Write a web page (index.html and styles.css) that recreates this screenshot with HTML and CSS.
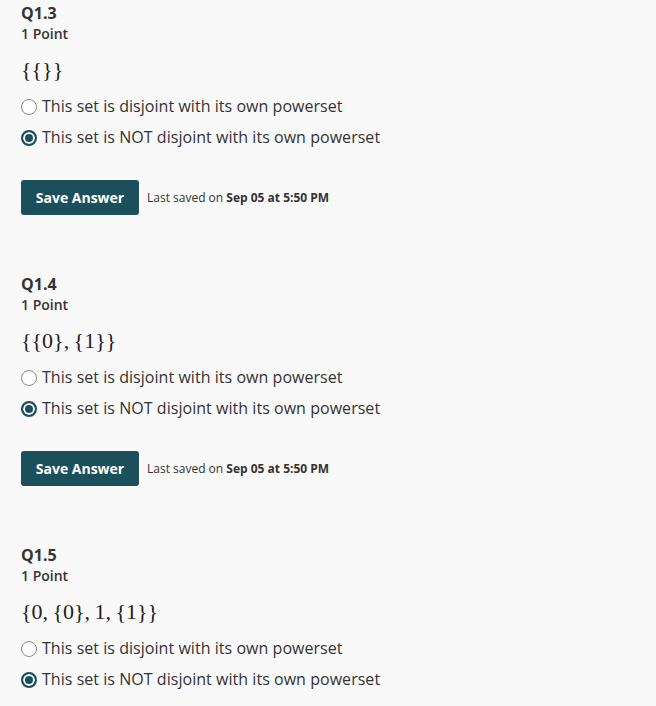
FILE: index.html
```html
<!DOCTYPE html>
<html lang="en">
<head>
  <meta charset="UTF-8">
  <meta name="viewport" content="width=device-width, initial-scale=1.0">
  <title>Questions</title>
  <link rel="stylesheet" href="styles.css">
</head>
<body>
  <div class="question">
    <h2 class="q-title">Q1.3</h2>
    <div class="q-points">1 Point</div>
    <div class="q-math">{{}}</div>
    <label class="option"><input type="radio" name="q13"> This set is disjoint with its own powerset</label>
    <label class="option"><input type="radio" name="q13" checked> This set is NOT disjoint with its own powerset</label>
    <div class="actions">
      <button type="button" class="save-btn">Save Answer</button>
      <span class="saved">Last saved on <b>Sep 05 at 5:50 PM</b></span>
    </div>
  </div>
  <div class="question">
    <h2 class="q-title">Q1.4</h2>
    <div class="q-points">1 Point</div>
    <div class="q-math">{{0},&thinsp;{1}}</div>
    <label class="option"><input type="radio" name="q14"> This set is disjoint with its own powerset</label>
    <label class="option"><input type="radio" name="q14" checked> This set is NOT disjoint with its own powerset</label>
    <div class="actions">
      <button type="button" class="save-btn">Save Answer</button>
      <span class="saved">Last saved on <b>Sep 05 at 5:50 PM</b></span>
    </div>
  </div>
  <div class="question">
    <h2 class="q-title">Q1.5</h2>
    <div class="q-points">1 Point</div>
    <div class="q-math">{0,&thinsp;{0},&thinsp;1,&thinsp;{1}}</div>
    <label class="option"><input type="radio" name="q15"> This set is disjoint with its own powerset</label>
    <label class="option"><input type="radio" name="q15" checked> This set is NOT disjoint with its own powerset</label>
  </div>
</body>
</html>
```

FILE: styles.css
```css
body {
  font-family: "Open Sans", sans-serif;
  margin: 0;
  padding: 2px 21px 0;
  background-color: #f9f9f9;
  color: #333;
}
.question {
  margin-bottom: 58px;
}
.q-title {
  font-size: 16px;
  font-weight: 700;
  line-height: 22px;
  margin: 0;
}
.q-points {
  font-size: 14px;
  font-weight: 600;
  line-height: 20px;
}
.q-math {
  font-family: "Liberation Serif", "DejaVu Serif", serif;
  font-size: 22px;
  line-height: 30px;
  margin-top: 11px;
  margin-bottom: 6px;
  color: #222;
}
.option {
  display: flex;
  align-items: center;
  gap: 5px;
  font-size: 16px;
  letter-spacing: 0.04px;
  line-height: 31px;
  height: 31px;
}
.option input {
  appearance: none;
  width: 16px;
  height: 16px;
  margin: 0;
  border: 1px solid #8a8a8a;
  border-radius: 50%;
  background-color: #fff;
  flex-shrink: 0;
}
.option input:checked {
  border: 2px solid #1b4f5b;
  box-shadow: inset 0 0 0 2px #fff;
  background-color: #1b4f5b;
}
.actions {
  display: flex;
  align-items: center;
  gap: 8px;
  margin-top: 27px;
}
.save-btn {
  font-family: "Open Sans", sans-serif;
  font-size: 14px;
  font-weight: 700;
  color: white;
  background-color: #1b4f5b;
  border: none;
  border-radius: 3px;
  width: 118px;
  height: 35px;
  padding: 0;
}
.saved {
  font-size: 12px;
}
.saved b {
  font-weight: 700;
}
```
